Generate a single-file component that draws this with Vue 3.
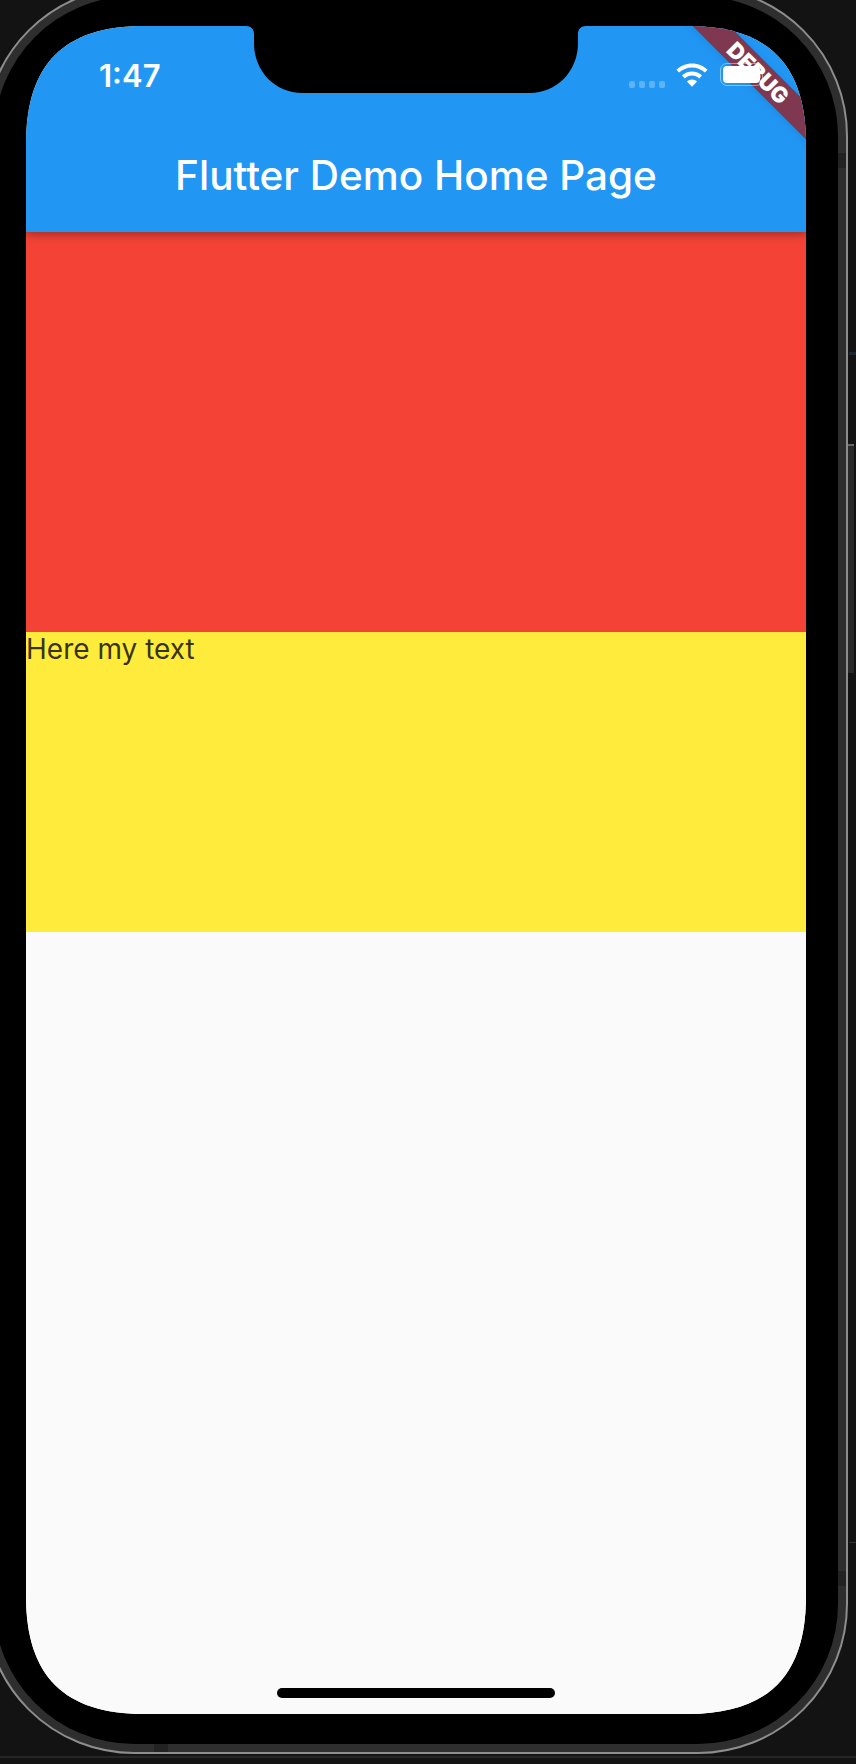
<script setup>
const title = 'Flutter Demo Home Page'
const time = '1:47'
const dots = [0, 1, 2, 3]
</script>

<template>
  <div class="stage">
    <div class="device">
      <div class="screen">
        <header class="appbar">
          <div class="status">
            <span class="time">{{ time }}</span>
            <div class="status-icons">
              <div class="cells">
                <i v-for="d in dots" :key="d" class="cell"></i>
              </div>
              <svg class="wifi" viewBox="0 0 32 24" aria-hidden="true">
                <path d="M16 0.5C9.9 0.5 4.4 2.9 0.4 6.8L3.1 9.6C6.4 6.4 11 4.4 16 4.4S25.6 6.4 28.9 9.6L31.6 6.8C27.6 2.9 22.1 0.5 16 0.5Z" fill="#fff"/>
                <path d="M16 8.6C12.1 8.6 8.6 10.1 6 12.6L8.8 15.4C10.7 13.6 13.2 12.5 16 12.5S21.3 13.6 23.2 15.4L26 12.6C23.4 10.1 19.9 8.6 16 8.6Z" fill="#fff"/>
                <path d="M16 16.6C14 16.6 12.2 17.4 10.9 18.6L16 23.8L21.1 18.6C19.8 17.4 18 16.6 16 16.6Z" fill="#fff"/>
              </svg>
              <div class="battery"><div class="battery-fill"></div></div>
            </div>
          </div>
          <h1 class="title">{{ title }}</h1>
        </header>
        <section class="red"></section>
        <section class="yellow">Here my text</section>
        <section class="rest"></section>
        <svg class="notch" viewBox="0 0 340 67" aria-hidden="true">
          <path d="M0 0H340C335 0 332 3 332 8V17C332 46 310 67 284 67H56C30 67 8 46 8 17V8C8 3 5 0 0 0Z" fill="#000"/>
        </svg>
        <div class="home"></div>
        <div class="ribbon"><span class="ribbon-text">DEBUG</span></div>
      </div>
      <i class="seam seam-top-right"></i>
      <i class="seam seam-bottom-right"></i>
      <i class="seam seam-bottom-left"></i>
    </div>
    <div class="side-button"></div>
    <div class="edge edge-blue"></div>
    <div class="edge edge-gray"></div>
    <div class="floor"></div>
  </div>
</template>

<style>
html, body { margin: 0; background: #131313; }
</style>

<style scoped>
.stage {
  position: relative;
  width: 856px;
  height: 1764px;
  overflow: hidden;
  background: #131313;
  font-family: Inter, "Liberation Sans", sans-serif;
}
.floor {
  position: absolute;
  left: 0;
  right: 0;
  top: 1756px;
  height: 2px;
  background: #262626;
}
.side-button {
  position: absolute;
  left: 848px;
  top: 444px;
  width: 6px;
  height: 229px;
  box-sizing: border-box;
  background: #292929;
  border-top: 2px solid #666;
}
.edge {
  position: absolute;
  left: 849px;
  right: 0;
}
.edge-blue {
  top: 352px;
  height: 3px;
  background: #1a2833;
}
.edge-gray {
  top: 1542px;
  height: 1px;
  background: #333;
}
.device {
  box-sizing: border-box;
  width: 864px;
  height: 1768px;
  margin: -14px 0 0 -16px;
  padding: 38px 40px 38px 40px;
  border: 2px solid #8d8d8d;
  border-radius: 150px;
  background: #2e2e2e;
  position: relative;
  z-index: 1;
}
.device::before {
  content: "";
  position: absolute;
  inset: 8px;
  border-radius: 140px;
  background: #000;
}
.seam {
  position: absolute;
  background: #222;
}
.seam-top-right {
  right: 0;
  top: 165px;
  width: 8px;
  height: 15px;
}
.seam-bottom-right {
  right: 0;
  top: 1583px;
  width: 8px;
  height: 15px;
}
.seam-bottom-left {
  left: 168px;
  bottom: 0;
  width: 14px;
  height: 8px;
}
.screen {
  position: relative;
  width: 780px;
  height: 1688px;
  overflow: hidden;
  background: #fafafa;
  display: flex;
  flex-direction: column;
  clip-path: path('M0 118C0 38 38 0 118 0H662C742 0 780 38 780 118V1570C780 1650 742 1688 662 1688H118C38 1688 0 1650 0 1570Z');
}
.appbar {
  position: relative;
  height: 206px;
  flex: none;
  background: #2196f3;
  color: #fff;
  box-shadow: 0 3px 8px rgba(0, 0, 0, 0.32);
  display: flex;
  flex-direction: column;
}
.status {
  position: relative;
  z-index: 5;
  height: 128px;
  flex: none;
  box-sizing: border-box;
  display: flex;
  justify-content: space-between;
  align-items: flex-start;
  padding: 32px 43px 0 73px;
}
.time {
  font-size: 31px;
  line-height: 36px;
  font-weight: 600;
}
.status-icons {
  display: flex;
  align-items: flex-start;
  margin-top: 5px;
}
.cells {
  display: flex;
  gap: 3.5px;
  margin-top: 18px;
  margin-right: 11px;
}
.cell {
  width: 6.5px;
  height: 6.5px;
  border-radius: 2px;
  background: rgba(255, 255, 255, 0.28);
}
.wifi {
  width: 32px;
  height: 24px;
  margin-right: 12px;
}
.battery {
  box-sizing: border-box;
  width: 43px;
  height: 23px;
  padding: 2px;
  border: 1.5px solid rgba(255, 255, 255, 0.45);
  border-radius: 7px;
}
.battery-fill {
  width: 100%;
  height: 100%;
  background: #fff;
  border-radius: 4px;
}
.title {
  margin: 0;
  text-align: center;
  font-size: 40.5px;
  line-height: 44px;
  font-weight: 450;
}
.red {
  height: 400px;
  flex: none;
  background: #f44336;
}
.yellow {
  height: 300px;
  flex: none;
  background: #ffeb3b;
  color: rgba(0, 0, 0, 0.8);
  font-size: 28px;
  line-height: 34px;
}
.rest {
  flex: 1;
  background: #fafafa;
}
.notch {
  position: absolute;
  left: 220px;
  top: 0;
  width: 340px;
  height: 67px;
  z-index: 3;
}
.home {
  position: absolute;
  left: 251px;
  bottom: 16px;
  width: 278px;
  height: 10px;
  background: #000;
  border-radius: 5px;
}
.ribbon {
  position: absolute;
  z-index: 4;
  left: 572px;
  top: 33.5px;
  width: 320px;
  height: 26px;
  transform: rotate(45deg);
  background: #7f3850;
  box-shadow: 0 2px 8px rgba(0, 0, 0, 0.08);
  color: #fff;
  font-size: 22px;
  line-height: 26px;
  font-weight: 900;
  text-align: center;
}
</style>
